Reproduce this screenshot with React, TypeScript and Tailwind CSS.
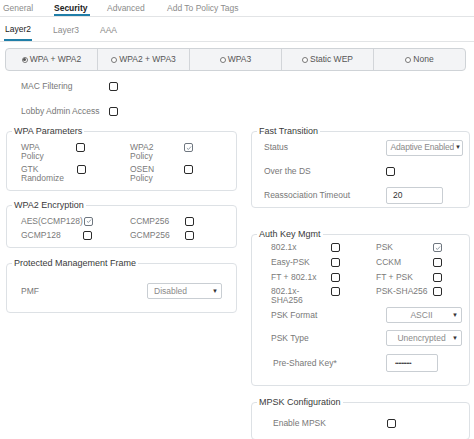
import React from 'react';

const font = { fontFamily: '"Liberation Sans", Arial, sans-serif' };

function Box({ checked = false }: { checked?: boolean }) {
  return (
    <span
      className={`inline-flex w-[9px] h-[9px] shrink-0 items-center justify-center rounded-[2px] border-[1.5px] ${
        checked ? 'border-[#6f7780]' : 'border-[#2b2b2b]'
      }`}
    >
      {checked && (
        <svg viewBox="0 0 10 10" className="w-[6px] h-[6px]">
          <path d="M1.5 5.2 L4 7.5 L8.5 2.5" fill="none" stroke="#7d8a96" strokeWidth="1.4" />
        </svg>
      )}
    </span>
  );
}

function Select({ value, w, align = 'left' }: { value: string; w: string; align?: 'left' | 'center' | 'right' }) {
  const pad = align === 'right' ? 'pl-[2px] pr-[1px]' : 'pl-[6px] pr-[3px]';
  const txt = align === 'center' ? 'text-center' : align === 'right' ? 'text-right tracking-[-0.2px]' : '';
  return (
    <div className={`${w} h-[16px] flex items-center border border-[#c9ced3] rounded-[2px] bg-white ${pad} text-[#8a8a8a]`}>
      <span className={`flex-1 ${txt} whitespace-nowrap overflow-hidden`}>{value}</span>
      <span className={`text-[6px] text-[#333] ${align === 'right' ? 'ml-[1px]' : 'ml-[2px]'}`}>▼</span>
    </div>
  );
}

function Group({ title, children, className = '' }: { title: string; children: React.ReactNode; className?: string }) {
  return (
    <fieldset className={`border border-[#dde1e5] rounded-[4px] ${className}`}>
      <legend className="ml-[5px] px-[2px] text-[9px] leading-[12px] text-[#3a3a3a]">{title}</legend>
      {children}
    </fieldset>
  );
}

function Cell({ label, w, checked, two = false }: { label: React.ReactNode; w: string; checked?: boolean; two?: boolean }) {
  return (
    <div className={`flex ${two ? 'items-start' : 'items-center'}`}>
      <span className={`${w} leading-[9px] text-[#7a7a7a]`}>{label}</span>
      <Box checked={checked} />
    </div>
  );
}

const radios = ['WPA + WPA2', 'WPA2 + WPA3', 'WPA3', 'Static WEP', 'None'];

export default function App() {
  return (
    <div className="w-[474px] h-[439px] bg-white overflow-hidden text-[8.5px] text-[#777]" style={font}>
      {/* Top tabs */}
      <div className="h-[17px] flex border-b border-[#e2e4e6] pl-[3px] text-[#8c8c8c]">
        <span className="w-[51px] pt-[2px]">General</span>
        <span className="w-[53px] flex">
          <span className="pt-[2px] border-b-2 border-[#1f7ea8] font-bold text-[#222] pr-[2px]">Security</span>
        </span>
        <span className="w-[60px] pt-[2px]">Advanced</span>
        <span className="pt-[2px]">Add To Policy Tags</span>
      </div>

      {/* Sub tabs */}
      <div className="h-[25px] flex border-b border-[#e2e4e6] pl-[4px] text-[#8c8c8c]">
        <span className="w-[49px] flex">
          <span className="flex items-center px-[1px] border-b-2 border-[#1f7ea8] text-[#222] pt-[3px]">Layer2</span>
        </span>
        <span className="w-[47px] flex items-center pt-[3px]">Layer3</span>
        <span className="flex items-center pt-[3px]">AAA</span>
      </div>

      {/* Radio group */}
      <div className="mt-[6px] ml-[5px] w-[461px] h-[23px] flex rounded-[4px] border border-[#cfd3d7] bg-[#f3f4f6]">
        {radios.map((r, i) => (
          <div
            key={r}
            className={`flex-1 flex items-center justify-center gap-[2px] text-[#555] ${
              i > 0 ? 'border-l border-[#d2d5d9]' : ''
            }`}
          >
            <span className="w-[6px] h-[6px] rounded-full border border-[#777] flex items-center justify-center bg-white">
              {i === 0 && <span className="w-[3px] h-[3px] rounded-full bg-[#555]" />}
            </span>
            <span>{r}</span>
          </div>
        ))}
      </div>

      {/* Top rows */}
      <div className="mt-[3px] pl-[21px]">
        <div className="h-[25px] flex items-center">
          <span className="w-[88px]">MAC Filtering</span>
          <Box />
        </div>
        <div className="h-[25px] flex items-center">
          <span className="w-[88px]">Lobby Admin Access</span>
          <Box />
        </div>
      </div>

      <div className="mt-[1px] flex">
        {/* Left column */}
        <div className="ml-[6px] w-[231px]">
          <Group title="WPA Parameters">
            <div className="pl-[14px] pt-[6px] pb-[7px] grid grid-cols-[109px_1fr]">
              <div className="h-[22px]">
                <Cell two w="w-[55px]" label={<>WPA<br />Policy</>} />
              </div>
              <div className="h-[22px]">
                <Cell two w="w-[54px]" checked label={<>WPA2<br />Policy</>} />
              </div>
              <Cell two w="w-[56px]" label={<>GTK<br />Randomize</>} />
              <Cell two w="w-[54px]" label={<>OSEN<br />Policy</>} />
            </div>
          </Group>

          <Group title="WPA2 Encryption" className="mt-[8px]">
            <div className="pl-[14px] pt-[3px] pb-[5px] grid grid-cols-[109px_1fr] auto-rows-[14px]">
              <Cell w="w-[63px]" checked label="AES(CCMP128)" />
              <Cell w="w-[55px]" label="CCMP256" />
              <Cell w="w-[62px]" label="GCMP128" />
              <Cell w="w-[55px]" label="GCMP256" />
            </div>
          </Group>

          <Group title="Protected Management Frame" className="mt-[9px]">
            <div className="pl-[14px] pt-[14px] pb-[13px] flex items-center">
              <span className="w-[126px]">PMF</span>
              <Select value="Disabled" w="w-[75px]" />
            </div>
          </Group>
        </div>

        {/* Right column */}
        <div className="ml-[14px] w-[219px]">
          <Group title="Fast Transition">
            <div className="pl-[12px] pt-[2px] pb-[3px] flex flex-col gap-[7px]">
              <div className="h-[17px] flex items-center">
                <span className="w-[122px]">Status</span>
                <Select value="Adaptive Enabled" w="w-[77px]" align="right" />
              </div>
              <div className="h-[17px] flex items-center">
                <span className="w-[122px]">Over the DS</span>
                <Box />
              </div>
              <div className="h-[17px] flex items-center">
                <span className="w-[122px]">Reassociation Timeout</span>
                <div className="w-[57px] h-[17px] border border-[#c9ced3] rounded-[2px] flex items-center pl-[6px] text-[#333]">20</div>
              </div>
            </div>
          </Group>

          <Group title="Auth Key Mgmt" className="mt-[20px]">
            <div className="pl-[19px] pb-[13px]">
              <div className="grid grid-cols-[105px_1fr] auto-rows-[15px]">
                <Cell w="w-[60px]" label="802.1x" />
                <Cell w="w-[57px]" checked label="PSK" />
                <Cell w="w-[60px]" label="Easy-PSK" />
                <Cell w="w-[57px]" label="CCKM" />
                <Cell w="w-[60px]" label="FT + 802.1x" />
                <Cell w="w-[57px]" label="FT + PSK" />
              </div>
              <div className="grid grid-cols-[105px_1fr] h-[20px] pt-[2px]">
                <Cell two w="w-[60px]" label={<>802.1x-<br />SHA256</>} />
                <Cell two w="w-[57px]" label="PSK-SHA256" />
              </div>
              <div className="mt-[2px] h-[16px] flex items-center">
                <span className="w-[115px]">PSK Format</span>
                <Select value="ASCII" w="w-[76px]" align="center" />
              </div>
              <div className="mt-[7px] h-[16px] flex items-center">
                <span className="w-[115px]">PSK Type</span>
                <Select value="Unencrypted" w="w-[76px]" align="center" />
              </div>
              <div className="mt-[8px] h-[18px] flex items-center">
                <span className="w-[115px] pl-[2px]">Pre-Shared Key*</span>
                <div className="w-[52px] h-[18px] border border-[#c9ced3] rounded-[2px] flex items-center pl-[8px] text-[#333] text-[6px] tracking-[-0.5px]">
                  ••••••••••
                </div>
              </div>
            </div>
          </Group>

          <Group title="MPSK Configuration" className="mt-[10px]">
            <div className="pl-[21px] pt-[4px] pb-[5px] h-[22px] box-content flex items-center">
              <span className="w-[114px]">Enable MPSK</span>
              <Box />
            </div>
          </Group>
        </div>
      </div>
    </div>
  );
}
